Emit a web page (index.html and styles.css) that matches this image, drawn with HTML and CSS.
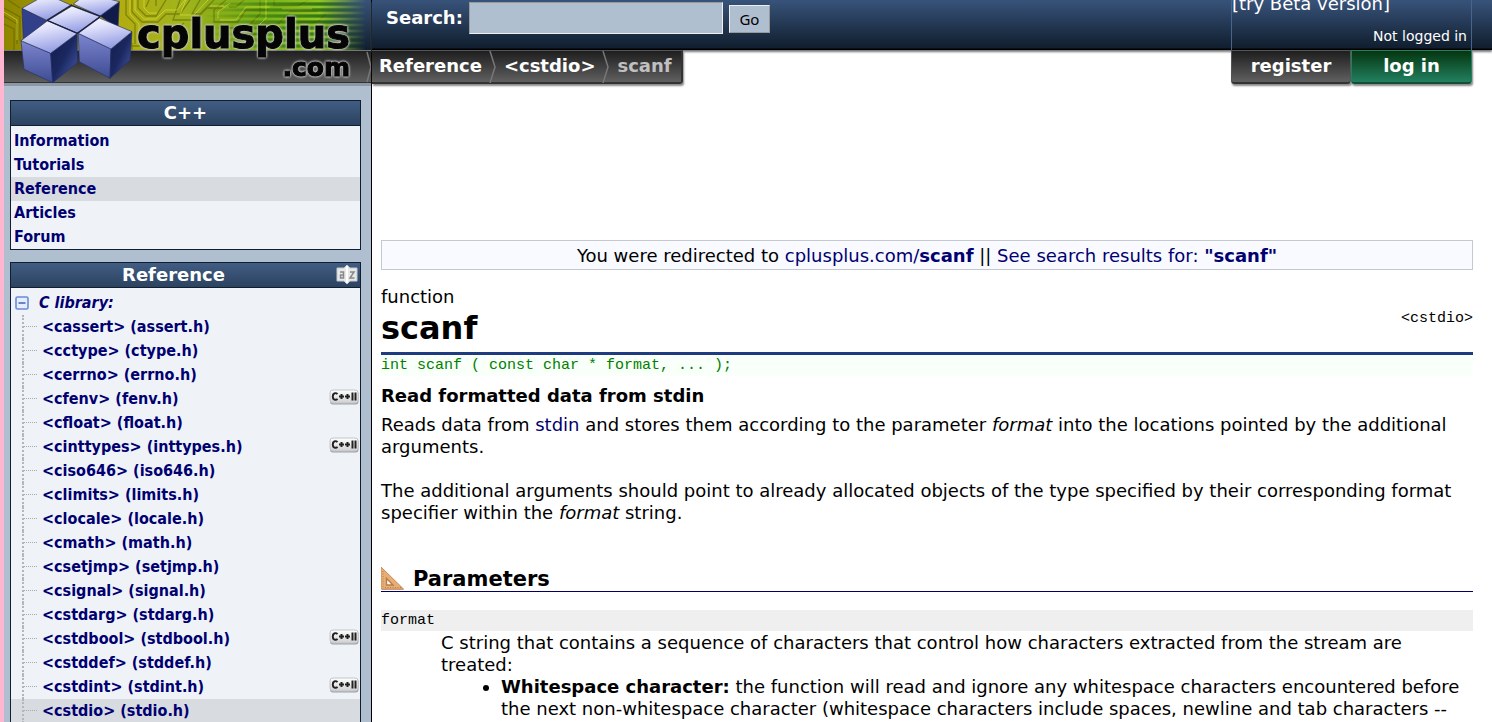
FILE: index.html
```
<!DOCTYPE html>
<html lang="en">
<head>
<meta charset="utf-8">
<title>scanf - C++ Reference</title>
<link rel="stylesheet" href="styles.css">
</head>
<body>
<svg width="0" height="0" class="defs" aria-hidden="true">
  <defs>
    <linearGradient id="badge" x1="0" y1="0" x2="0" y2="1"><stop offset="0" stop-color="#fff"/><stop offset="1" stop-color="#d0d0d0"/></linearGradient>
    <symbol id="cpp11" viewBox="0 0 30 16">
      <rect x="1" y="2" width="28.500" height="13.500" rx="3" fill="#8b8f94" opacity=".8"/>
      <rect x="1" y="1" width="28" height="13" rx="3" fill="url(#badge)" stroke="#c3c5c8"/>
      <path d="M8.500 5.200Q7.500 4 6 4.200 3.800 4.500 3.800 7.500t2.200 3.200Q7.500 11 8.500 9.800" fill="none" stroke="#222" stroke-width="1.900"/>
      <path d="M10 7.500h5M12.500 5v5M16 7.500h5M18.500 5v5" stroke="#222" stroke-width="2"/>
      <path d="M23.500 3.500v8M26.500 3.500v8" stroke="#222" stroke-width="2"/>
    </symbol>
  </defs>
</svg>
<div class="page">
  <aside class="side">
    <a class="logo" href="#" aria-label="cplusplus.com">
      <svg viewBox="0 0 368 86" width="368" height="86">
        <defs>
          <linearGradient id="board"><stop offset="0" stop-color="#8f8500"/><stop offset=".3" stop-color="#b3ac10"/><stop offset=".5" stop-color="#9fb41c"/><stop offset=".72" stop-color="#5c9c12"/><stop offset="1" stop-color="#4c8c1a"/></linearGradient>
          <linearGradient id="bar" x1="0" y1="0" x2="0" y2="1"><stop offset="0" stop-color="#1e1e1e"/><stop offset="1" stop-color="#606060"/></linearGradient>
          <linearGradient id="navy" x1="0" y1="0" x2="0" y2="1"><stop offset="0" stop-color="#38537a"/><stop offset="1" stop-color="#101e2e"/></linearGradient>
          <linearGradient id="fade"><stop offset="0" stop-color="#000"/><stop offset="1" stop-color="#fff"/></linearGradient>
          <mask id="fademask"><rect x="315" width="47" height="52" fill="url(#fade)"/><rect x="361" width="8" height="52" fill="#fff"/></mask>
          <pattern id="lines" width="8" height="6" patternUnits="userSpaceOnUse"><rect width="8" height="2" fill="#b9e22a" opacity=".75"/><rect y="3" width="8" height="2" fill="#185c18" opacity=".6"/></pattern>
          <mask id="linemask"><rect x="200" width="140" height="52" fill="url(#fade)"/><rect x="340" width="30" height="52" fill="#fff"/></mask>
          <linearGradient id="top" x1="0" y1="0" x2=".3" y2="1"><stop offset="0" stop-color="#fbfbff"/><stop offset=".35" stop-color="#e0e2fb"/><stop offset="1" stop-color="#98a0e4"/></linearGradient>
          <linearGradient id="left" x1="0" y1="0" x2="0" y2="1"><stop offset="0" stop-color="#7d86d0"/><stop offset="1" stop-color="#3d4c92"/></linearGradient>
          <linearGradient id="right" x1="0" y1="0" x2="1" y2="1"><stop offset="0" stop-color="#111c49"/><stop offset=".5" stop-color="#1b2860"/><stop offset="1" stop-color="#4c5eb0"/></linearGradient>
        </defs>
        <rect width="368" height="50" fill="url(#board)"/>
        <g fill="none" stroke="#5f6500" stroke-width="1.300" opacity=".6">
          <path d="M0 8l16 9v24M4 0l12 8M0 24l10 5v21M0 16l13 8v20M122 0v15l9 9v20M128 0v12l10 10h16l8-8h14l10-14M134 0v8l8 8h10l10-16M145 0l-3 7M116 30l12 14v6M152 0v6M176 0l-7 20h22l12-12h16M196 0l-8 14h8l14-14M222 0l-12 10v12h24l8-12h22M240 0l-8 7h-7M256 0v14l-10 10h28l12-12h28M270 0v6h24l10-6M284 22h30l8-9h20M124 46h12M162 30h10l8-7M218 28h14l8 6h24M300 24v20M310 28h20"/>
        </g>
        <g fill="none" stroke="#e5e33a" stroke-width="1" opacity=".6">
          <path d="M0 12l13 8v20M126 0v14l9 10v18M131 0v10l9 9h12l9-9h12l8-10M140 0v8l5 5h8M182 0l-6 15h14l14-15M206 6h14M216 20h16l10-13h24M262 0v18l-8 8M278 9h30M226 3l-12 9v6"/>
        </g>
        <rect x="200" width="168" height="50" fill="url(#lines)" mask="url(#linemask)"/>
        <rect x="315" width="53" height="50" fill="url(#navy)" mask="url(#fademask)"/>
        <rect y="82" width="368" height="4" fill="#707883" opacity=".55"/>
        <rect y="50" width="368" height="33" fill="url(#bar)"/>
        <path d="M0 50.500h368" stroke="#777"/>
        <path d="M0 82.500h368" stroke="#333"/>
        <path d="M363 52l4 15-4 15" fill="none" stroke="#777" stroke-width="1.500"/>
        <g transform="scale(.3333) translate(-12 0)" stroke="#27306a" stroke-width="2" stroke-linejoin="round">
          <path d="M66 25l74 37-70 58z" fill="#323f8b"/>
          <path d="M66 25l74-42 72 32-72 46z" fill="url(#top)"/>
          <path d="M300 48l58-42-4 78z" fill="#111b49"/>
          <path d="M220 12l42-32 96 25-58 43z" fill="url(#top)"/>
          <path d="M143 62l73-44 84 32-68 50z" fill="url(#top)"/>
          <path d="M63 122l89 38 6 88-86-40z" fill="url(#left)"/>
          <path d="M152 160l80-60v88l-74 60z" fill="url(#right)"/>
          <path d="M63 122l80-60 89 38-80 60z" fill="url(#top)"/>
          <path d="M235 100l98 47-3 88-92-50z" fill="url(#left)"/>
          <path d="M333 147l63-52-6 85-60 55z" fill="url(#right)"/>
          <path d="M235 100l63-46 98 41-63 52z" fill="url(#top)"/>
          <path d="M140 62l76-47M212 15l90 34M143 62l89 38 68-50" fill="none" stroke="#1c2140" stroke-width="4"/>
        </g>
        <g class="logo-text" text-anchor="end">
          <text class="word" x="346" y="48">cplusplus</text>
          <text class="tld" x="346" y="76">.com</text>
        </g>
      </svg>
    </a>
    <nav class="box">
      <h2 class="box-title">C++</h2>
      <ul class="menu">
        <li><a href="#">Information</a></li>
        <li><a href="#">Tutorials</a></li>
        <li class="current"><a href="#">Reference</a></li>
        <li><a href="#">Articles</a></li>
        <li><a href="#">Forum</a></li>
      </ul>
    </nav>
    <nav class="box">
      <h2 class="box-title with-icon">Reference
        <svg class="az" width="22" height="20" viewBox="0 0 22 20" aria-hidden="true">
          <path d="M1 3h7l3-3 3 3h7v13h-7l-3 3-3-3H1z" fill="#e8e8e8" stroke="#c5c9cf"/>
          <path d="M11 1v17" stroke="#fff" stroke-width="2"/>
          <path d="M4 7h3.500v6H4.500V10H7.500M14 7h4l-4 6h4.500" fill="none" stroke="#888" stroke-width="1.500"/>
        </svg>
      </h2>
      <div class="tree">
        <div class="tree-head">
          <svg width="14" height="14" viewBox="0 0 14 14" aria-hidden="true"><rect x="1" y="1" width="12" height="12" rx="1.500" fill="#e4edff" stroke="#6b8bd8" stroke-width="1.600"/><path d="M3.500 7h7" stroke="#4262a8" stroke-width="1.500"/></svg>
          <a href="#">C library:</a>
        </div>
        <ul class="branch">
          <li><a href="#">&lt;cassert&gt; (assert.h)</a></li>
          <li><a href="#">&lt;cctype&gt; (ctype.h)</a></li>
          <li><a href="#">&lt;cerrno&gt; (errno.h)</a></li>
          <li><a href="#">&lt;cfenv&gt; (fenv.h)</a><svg class="tag" width="30" height="16"><use href="#cpp11"/></svg></li>
          <li><a href="#">&lt;cfloat&gt; (float.h)</a></li>
          <li><a href="#">&lt;cinttypes&gt; (inttypes.h)</a><svg class="tag" width="30" height="16"><use href="#cpp11"/></svg></li>
          <li><a href="#">&lt;ciso646&gt; (iso646.h)</a></li>
          <li><a href="#">&lt;climits&gt; (limits.h)</a></li>
          <li><a href="#">&lt;clocale&gt; (locale.h)</a></li>
          <li><a href="#">&lt;cmath&gt; (math.h)</a></li>
          <li><a href="#">&lt;csetjmp&gt; (setjmp.h)</a></li>
          <li><a href="#">&lt;csignal&gt; (signal.h)</a></li>
          <li><a href="#">&lt;cstdarg&gt; (stdarg.h)</a></li>
          <li><a href="#">&lt;cstdbool&gt; (stdbool.h)</a><svg class="tag" width="30" height="16"><use href="#cpp11"/></svg></li>
          <li><a href="#">&lt;cstddef&gt; (stddef.h)</a></li>
          <li><a href="#">&lt;cstdint&gt; (stdint.h)</a><svg class="tag" width="30" height="16"><use href="#cpp11"/></svg></li>
          <li class="current"><a href="#">&lt;cstdio&gt; (stdio.h)</a></li>
        </ul>
      </div>
    </nav>
  </aside>
  <div class="body">
    <header class="top">
      <form class="search">
        <label for="q">Search:</label>
        <input id="q" type="text">
        <button type="button">Go</button>
      </form>
      <div class="user">
        <a href="#">[try Beta version]</a>
        <span>Not logged in</span>
      </div>
    </header>
    <div class="bar">
      <nav class="crumbs">
        <a href="#">Reference</a>
        <svg width="8" height="32" viewBox="0 0 8 32" aria-hidden="true"><path d="M1 0l5 16-5 16" fill="none" stroke="#777" stroke-width="1.500"/></svg>
        <a href="#">&lt;cstdio&gt;</a>
        <svg width="8" height="32" viewBox="0 0 8 32" aria-hidden="true"><path d="M1 0l5 16-5 16" fill="none" stroke="#777" stroke-width="1.500"/></svg>
        <span>scanf</span>
      </nav>
      <div class="account">
        <a href="#">register</a>
        <a class="login" href="#">log in</a>
      </div>
    </div>
    <main class="content">
      <p class="notice">You were redirected to <a href="#">cplusplus.com/<b>scanf</b></a> || <a href="#">See search results for: <b>"scanf"</b></a></p>
      <div class="heading">
        <div>
          <div class="kind">function</div>
          <h1>scanf</h1>
        </div>
        <a class="header-file" href="#">&lt;cstdio&gt;</a>
      </div>
      <pre class="proto">int scanf ( const char * format, ... );</pre>
      <h2 class="tagline">Read formatted data from stdin</h2>
      <p>Reads data from <a href="#">stdin</a> and stores them according to the parameter <i>format</i> into the locations pointed by the additional arguments.</p>
      <p>The additional arguments should point to already allocated objects of the type specified by their corresponding format specifier within the <i>format</i> string.</p>
      <h3 class="section">
        <svg width="24" height="24" viewBox="0 0 24 24" aria-hidden="true"><path d="M1 1v22h22z" fill="#b8845a" opacity=".7"/><path d="M0 0v22h22.500z" fill="#e8ae76" stroke="#c98e5b"/><path d="M5.500 11.500v6.500h6.500z" fill="#fff" stroke="#b97c49" stroke-width="1.400"/><path d="M2 4v16M4 20.500h16" stroke="#b97c49" stroke-dasharray="1 1.500"/></svg>
        Parameters
      </h3>
      <dl>
        <dt>format</dt>
        <dd>C string that contains a sequence of characters that control how characters extracted from the stream are treated:
          <ul>
            <li><b>Whitespace character:</b> the function will read and ignore any whitespace characters encountered before the next non-whitespace character (whitespace characters include spaces, newline and tab characters --</li>
          </ul>
        </dd>
      </dl>
    </main>
  </div>
</div>
</body>
</html>
```

FILE: styles.css
```
* { box-sizing: border-box; }
html { overflow: hidden; }
body {
  margin: 0;
  background: #fff;
  color: #000;
  font: 18px/22px "DejaVu Sans", Verdana, sans-serif;
}
a { color: #000070; text-decoration: none; }
ul, h1, h2, h3, p, dl, dd, pre { margin: 0; padding: 0; }
.defs { position: absolute; }

.page {
  display: grid;
  grid-template-columns: 368px minmax(0, 1fr);
  height: 100vh;
  border-left: 4px solid #ffb6d0;
}

/* left column */
.side {
  background: #b0bfd0;
  border-right: 1px solid #000;
  overflow: hidden;
}
.logo { display: block; height: 86px; margin-right: -1px; }
.logo svg { display: block; }
.logo-text {
  font-family: "DejaVu Sans", sans-serif;
  font-weight: bold;
  fill: #050505;
  stroke: #050505;
  stroke-width: 1px;
  filter: drop-shadow(0 0 1px #ddd) drop-shadow(0 0 1px #bbb);
}
.word { font-size: 40px; }
.tld { font-size: 25px; }

.box {
  margin: 14px 10px 12px 6px;
  background: #eff3f8;
  border: 1px solid #0f1e30;
}
.box + .box { margin-top: 0; }
.box-title {
  position: relative;
  height: 25px;
  background: linear-gradient(#415d83, #2c4360);
  border-bottom: 1px solid #0f1e30;
  color: #fff;
  font-size: 18px;
  line-height: 24px;
  text-align: center;
}
.with-icon { padding-right: 24px; }
.az { position: absolute; right: 2px; top: 2px; }
.menu, .branch { list-style: none; }
.menu, .tree {
  padding-top: 3px;
  font: bold 16px/24px "DejaVu Sans Condensed", "DejaVu Sans", Tahoma, sans-serif;
}
.menu li { padding: 0 3px; }
.current { background: #d8dbe0; }
.tree-head {
  display: flex;
  gap: 10px;
  align-items: center;
  height: 24px;
  padding-left: 4px;
  font-style: italic;
}
.branch li {
  position: relative;
  display: flex;
  justify-content: space-between;
  height: 24px;
  padding-left: 31px;
}
.branch li::before {
  content: "";
  position: absolute;
  left: 11px;
  top: 0;
  width: 14px;
  height: 24px;
  border-left: 2px dotted #b4b6ba;
  background: repeating-linear-gradient(90deg, #aaa 0 1px, transparent 1px 2px) 0 11px / 14px 1px no-repeat;
}
.tag { margin: 2px 1px 0 0; }

/* header */
.top {
  position: relative;
  z-index: 1;
  display: flex;
  justify-content: space-between;
  height: 50px;
  padding-right: 20px;
  background: linear-gradient(#38537a, #101e2e 48px, #000 49px);
  box-shadow: 0 2px 2px #777;
}
.search {
  display: flex;
  align-items: flex-start;
  gap: 6px;
  padding: 2px 0 0 14px;
  color: #fff;
  font-weight: bold;
}
.search label { line-height: 32px; }
.search input {
  width: 254px;
  height: 32px;
  background: #b0bfd0;
  border: 1px solid;
  border-color: #999 #f0f0f0 #f0f0f0 #999;
}
.search button {
  width: 41px;
  height: 28px;
  margin-top: 3px;
  padding: 0;
  background: #b0bfd0;
  border: 1px solid;
  border-color: #eee #999 #999 #eee;
  font: 15px/22px "Noto Sans", sans-serif;
}
.user {
  display: flex;
  flex-direction: column;
  justify-content: flex-end;
  gap: 13px;
  width: 241px;
  height: 50px;
  overflow: hidden;
  padding: 0 4px 6px 0;
  border: solid #46648e;
  border-width: 0 1px;
  color: #fff;
}
.user a { color: #fff; }
.user span { font-size: 14px; line-height: 16px; text-align: right; }

.bar {
  position: relative;
  z-index: 2;
  display: flex;
  justify-content: space-between;
  height: 34px;
  padding-right: 20px;
  font-weight: bold;
}
.crumbs, .account a {
  background: linear-gradient(#1e1e1e, #606060);
  color: #fff;
  border: 1px solid #555;
  border-bottom: 2px solid #333;
  border-radius: 0 0 3px 3px;
  box-shadow: 1px 2px 2px #888;
}
.crumbs {
  display: flex;
  gap: 7px;
  padding: 0 9px 0 7px;
  border-left: 0;
  border-right: 2px solid #333;
  border-bottom-left-radius: 0;
  line-height: 30px;
}
.crumbs a { color: #fff; }
.crumbs span { color: #c0c0c0; }
.account { display: flex; }
.account a { width: 120px; line-height: 30px; text-align: center; }
.account a.login {
  width: 121px;
  background: linear-gradient(#053510, #228060);
  border-color: #228060;
  border-bottom-color: #145038;
}

/* article */
.content { padding: 156px 19px 0 9px; }
.notice {
  height: 30px;
  background: #f8faff;
  border: 1px solid #c4c8d0;
  line-height: 30px;
  text-align: center;
}
.heading {
  display: flex;
  justify-content: space-between;
  align-items: flex-start;
  height: 85px;
  padding-top: 16px;
  border-bottom: 3px solid #203c80;
}
h1 { font-size: 32px; line-height: 40px; }
.header-file { color: #000; font: 15px/22px "Liberation Mono", monospace; padding-top: 22px; }
.proto {
  height: 21px;
  background: #f9fff9;
  color: #008000;
  font: 15px/22px "Liberation Mono", monospace;
}
.tagline { padding: 9px 0 7px; font-size: 18px; }
.content p + p { margin-top: 22px; }
.section {
  display: flex;
  gap: 8px;
  align-items: center;
  height: 26px;
  margin: 42px 0 18px;
  border-bottom: 1px solid #000060;
  font-size: 21px;
}
dt {
  height: 22px;
  background: linear-gradient(#efefef, #efefef) 0 0 / 100% 21px no-repeat;
  font: 15px/22px "Liberation Mono", monospace;
}
dd { padding-left: 60px; }
dd ul { padding-left: 60px; }
```
